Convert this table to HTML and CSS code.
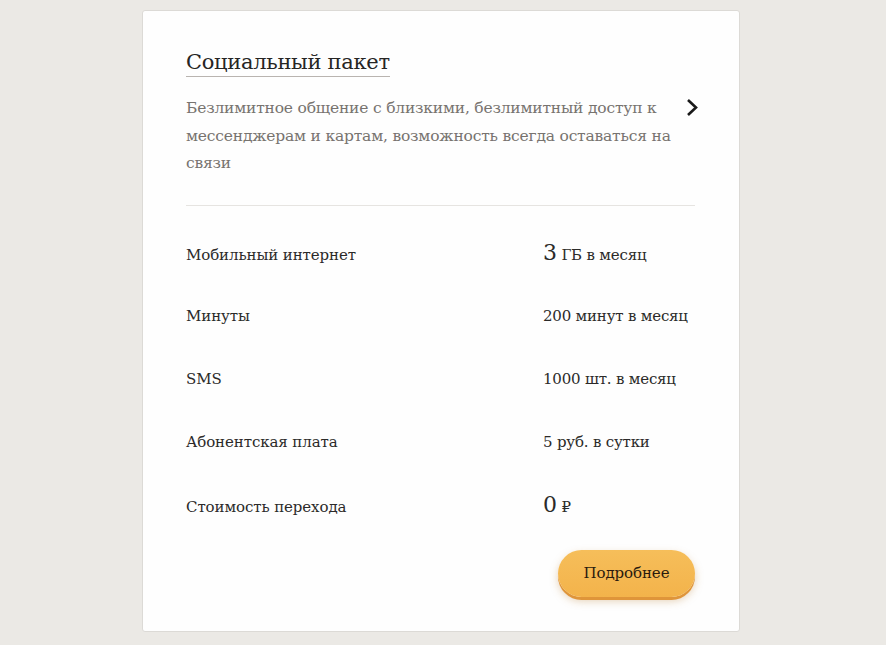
FILE: index.html
```html
<!DOCTYPE html>
<html lang="ru">
<head>
<meta charset="utf-8">
<link rel="stylesheet" href="styles.css">
</head>
<body>
<div class="card">
  <div class="head">
    <h1 class="title">Социальный пакет</h1>
  </div>
  <div class="desc-row">
    <p class="desc">Безлимитное общение с близкими, безлимитный доступ к мессенджерам и картам, возможность всегда оставаться на связи</p>
    <svg class="chev" width="12" height="19" viewBox="0 0 12 19"><path d="M2 2 L10 9.5 L2 17" fill="none" stroke="#1a1a1a" stroke-width="2.6"/></svg>
  </div>
  <div class="divider"></div>
  <div class="rows">
    <div class="row"><span class="label">Мобильный интернет</span><span class="value"><span class="big">3</span> ГБ в месяц</span></div>
    <div class="row"><span class="label">Минуты</span><span class="value">200 минут в месяц</span></div>
    <div class="row"><span class="label">SMS</span><span class="value">1000 шт. в месяц</span></div>
    <div class="row"><span class="label">Абонентская плата</span><span class="value">5 руб. в сутки</span></div>
    <div class="row"><span class="label">Стоимость перехода</span><span class="value"><span class="big">0</span> ₽</span></div>
  </div>
  <div class="actions">
    <button class="btn">Подробнее</button>
  </div>
</div>
</body>
</html>
```
FILE: styles.css
```css
html, body {
  margin: 0;
  padding: 0;
  background: #ebe9e5;
  height: 645px;
  overflow: hidden;
}
body {
  font-family: "DejaVu Serif", "Liberation Serif", serif;
  color: #2b2a29;
  padding-top: 10px;
}
.card {
  margin-left: 142px;
  height: 620px;
  background: #fefefe;
  border: 1px solid #dcdad6;
  border-radius: 3px;
  padding: 0 44px 0 43px;
  box-sizing: content-box;
  width: 509px;
}
.head {
  padding-top: 38px;
  display: flex;
}
.title {
  margin: 0;
  font-weight: normal;
  font-size: 21px;
  line-height: 27px;
  color: #262524;
  border-bottom: 1px solid #b9b4b0;
  letter-spacing: -0.3px;
}
.desc-row {
  display: flex;
  justify-content: space-between;
  align-items: flex-start;
  margin-top: 18px;
}
.desc {
  margin: 0;
  width: 492px;
  font-size: 15.5px;
  line-height: 27.5px;
  color: #77736f;
  letter-spacing: -0.2px;
}
.chev {
  margin-top: 3px;
  margin-right: -3px;
}
.divider {
  height: 1px;
  background: #e6e4e1;
  margin-top: 27px;
}
.rows {
  padding-top: 32px;
  display: flex;
  flex-direction: column;
}
.row {
  display: flex;
  align-items: baseline;
  height: 63px;
  line-height: 30px;
  font-size: 15px;
  color: #2b2a29;
}
.label {
  width: 357px;
  letter-spacing: -0.1px;
}
.value {
  letter-spacing: -0.2px;
}
.big {
  font-size: 22px;
}
.actions {
  display: flex;
  justify-content: flex-end;
  margin-top: -3px;
}
.btn {
  width: 137px;
  height: 47px;
  border: none;
  border-radius: 24px;
  background: linear-gradient(#f6be5a, #f3b34b);
  box-shadow: 0 3px 0 #df953a, 0 4px 8px rgba(180, 120, 40, 0.35);
  font-family: "DejaVu Serif", "Liberation Serif", serif;
  font-size: 15px;
  color: #2a1a0e;
  letter-spacing: -0.1px;
  padding: 0;
}
```
